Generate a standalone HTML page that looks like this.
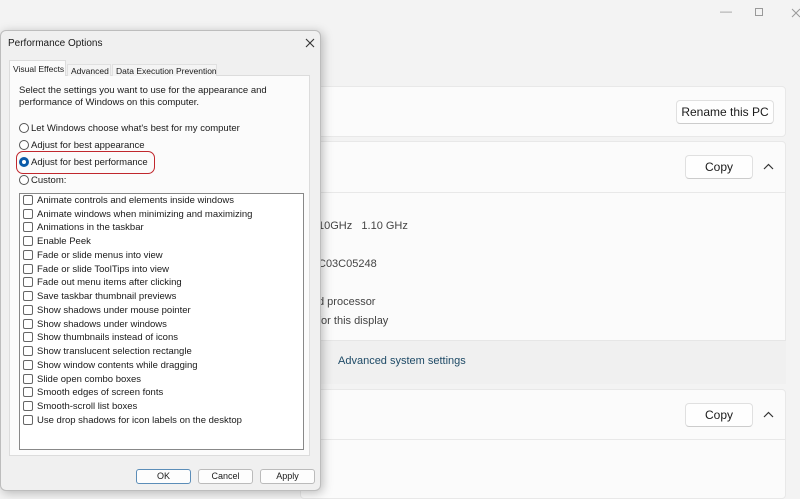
<!DOCTYPE html>
<html><head><style>
*{margin:0;padding:0;box-sizing:border-box}
body{width:800px;height:492px;overflow:hidden;background:#f3f3f3;font-family:"Liberation Sans",sans-serif;position:relative;color:#1a1a1a}
.a{position:absolute;white-space:nowrap}
.card{position:absolute;left:300px;width:486px;background:#fbfbfb;border:1px solid #e8e8e8;border-radius:4px}
.btn{position:absolute;background:#fefefe;border:1px solid #e0e0e0;border-bottom-color:#ccc;border-radius:4px;font-size:12px;text-align:center}
.dlg{position:absolute;left:0;top:30px;width:321px;height:461px;background:#f0f0f0;border:1px solid #bdbdbd;border-radius:6px;box-shadow:2px 2px 10px rgba(0,0,0,.25);font-size:9.5px}
.cb{position:absolute;left:3px;width:10px;height:10px;border:1px solid #666;border-radius:2px;background:#fff;margin-top:-2px}
.rd{position:absolute;width:10px;height:10px;border:1px solid #555;border-radius:50%;background:#fff;margin-top:-1px}
.db{position:absolute;top:438px;height:15px;border:1px solid #bbb;border-radius:3px;background:#fdfdfd;text-align:center;line-height:13px;font-size:9px}
</style></head><body>
<div class="a" style="left:720px;top:4px;color:#999;font-size:12px">—</div>
<div class="a" style="left:755px;top:8px;width:8px;height:8px;border:1px solid #999"></div>
<svg class="a" style="left:791px;top:8px" width="10" height="10"><path d="M1 1L9 9M9 1L1 9" stroke="#999" stroke-width="1"/></svg>

<div class="card" style="top:86px;height:51px"></div>
<div class="btn" style="left:676px;top:100px;width:98px;height:24px;line-height:22px">Rename this PC</div>

<div class="card" style="top:141px;height:243px"></div>
<div class="a" style="left:300px;top:192px;width:486px;height:1px;background:#e8e8e8"></div>
<div class="btn" style="left:685px;top:155px;width:68px;height:24px;line-height:22px">Copy</div>
<svg class="a" style="left:763px;top:163px" width="11" height="7"><path d="M1 6L5.5 1.5L10 6" stroke="#333" stroke-width="1.2" fill="none"/></svg>
<div class="a" style="left:318px;top:220px;font-size:11px;color:#444">10GHz&nbsp;&nbsp;&nbsp;1.10 GHz</div>
<div class="a" style="left:318px;top:258px;font-size:11px;color:#444">C03C05248</div>
<div class="a" style="left:318px;top:296px;font-size:11px;color:#444">d processor</div>
<div class="a" style="left:318px;top:315px;font-size:11px;color:#444">for this display</div>
<div class="a" style="left:300px;top:340px;width:486px;height:44px;background:#f0f0f0;border-top:1px solid #e6e6e6"></div>
<div class="a" style="left:338px;top:355px;font-size:11px;color:#1e4a66">Advanced system settings</div>

<div class="card" style="top:389px;height:110px"></div>
<div class="a" style="left:300px;top:439px;width:486px;height:1px;background:#e8e8e8"></div>
<div class="btn" style="left:685px;top:403px;width:68px;height:24px;line-height:22px">Copy</div>
<svg class="a" style="left:763px;top:411px" width="11" height="7"><path d="M1 6L5.5 1.5L10 6" stroke="#333" stroke-width="1.2" fill="none"/></svg>

<div class="dlg">
 <div class="a" style="left:7px;top:7px;font-size:10px">Performance Options</div>
 <svg class="a" style="left:304px;top:7px" width="10" height="10"><path d="M1 1L9 9M9 1L1 9" stroke="#333" stroke-width="1.1"/></svg>
 <div class="a" style="left:8px;top:44px;width:301px;height:381px;background:#fbfbfb;border:1px solid #dcdcdc"></div>
 <div class="a" style="left:8px;top:29px;width:57px;height:16px;background:#fbfbfb;border:1px solid #dcdcdc;border-bottom:none;font-size:8.5px;padding:3px 0 0 3px">Visual Effects</div>
 <div class="a" style="left:66px;top:33px;width:44px;height:12px;background:#f4f4f4;border:1px solid #e0e0e0;border-bottom:none;font-size:8.5px;padding:1px 0 0 3px">Advanced</div>
 <div class="a" style="left:111px;top:33px;width:105px;height:12px;background:#f4f4f4;border:1px solid #e0e0e0;border-bottom:none;font-size:8.5px;padding:1px 0 0 3px">Data Execution Prevention</div>
 <div class="a" style="left:18px;top:54px;line-height:12px">Select the settings you want to use for the appearance and<br>performance of Windows on this computer.</div>
 <div class="rd" style="left:18px;top:93px"></div><div class="a" style="left:30px;top:92px">Let Windows choose what's best for my computer</div>
 <div class="rd" style="left:18px;top:110px"></div><div class="a" style="left:30px;top:109px">Adjust for best appearance</div>
 <div class="rd" style="left:18px;top:127px;border:3px solid #0a5aa8"></div><div class="a" style="left:30px;top:126px">Adjust for best performance</div>
 <div class="a" style="left:15px;top:120px;width:139px;height:23px;border:1.5px solid #c0272d;border-radius:7px"></div>
 <div class="rd" style="left:18px;top:145px"></div><div class="a" style="left:30px;top:144px">Custom:</div>
 <div class="a" style="left:18px;top:162px;width:285px;height:257px;background:#fff;border:1px solid #888">
  <div style="position:relative">
  <div class="cb" style="top:3px"></div><div class="a" style="left:17px;top:1px">Animate controls and elements inside windows</div>
  <div class="cb" style="top:17px"></div><div class="a" style="left:17px;top:15px">Animate windows when minimizing and maximizing</div>
  <div class="cb" style="top:30px"></div><div class="a" style="left:17px;top:28px">Animations in the taskbar</div>
  <div class="cb" style="top:44px"></div><div class="a" style="left:17px;top:42px">Enable Peek</div>
  <div class="cb" style="top:58px"></div><div class="a" style="left:17px;top:56px">Fade or slide menus into view</div>
  <div class="cb" style="top:72px"></div><div class="a" style="left:17px;top:70px">Fade or slide ToolTips into view</div>
  <div class="cb" style="top:85px"></div><div class="a" style="left:17px;top:83px">Fade out menu items after clicking</div>
  <div class="cb" style="top:99px"></div><div class="a" style="left:17px;top:97px">Save taskbar thumbnail previews</div>
  <div class="cb" style="top:113px"></div><div class="a" style="left:17px;top:111px">Show shadows under mouse pointer</div>
  <div class="cb" style="top:127px"></div><div class="a" style="left:17px;top:125px">Show shadows under windows</div>
  <div class="cb" style="top:140px"></div><div class="a" style="left:17px;top:138px">Show thumbnails instead of icons</div>
  <div class="cb" style="top:154px"></div><div class="a" style="left:17px;top:152px">Show translucent selection rectangle</div>
  <div class="cb" style="top:168px"></div><div class="a" style="left:17px;top:166px">Show window contents while dragging</div>
  <div class="cb" style="top:182px"></div><div class="a" style="left:17px;top:180px">Slide open combo boxes</div>
  <div class="cb" style="top:195px"></div><div class="a" style="left:17px;top:193px">Smooth edges of screen fonts</div>
  <div class="cb" style="top:209px"></div><div class="a" style="left:17px;top:207px">Smooth-scroll list boxes</div>
  <div class="cb" style="top:223px"></div><div class="a" style="left:17px;top:221px">Use drop shadows for icon labels on the desktop</div>
  </div>
 </div>
 <div class="db" style="left:135px;width:55px;border-color:#5b8db8">OK</div>
 <div class="db" style="left:197px;width:55px">Cancel</div>
 <div class="db" style="left:259px;width:55px">Apply</div>
</div>
</body></html>
